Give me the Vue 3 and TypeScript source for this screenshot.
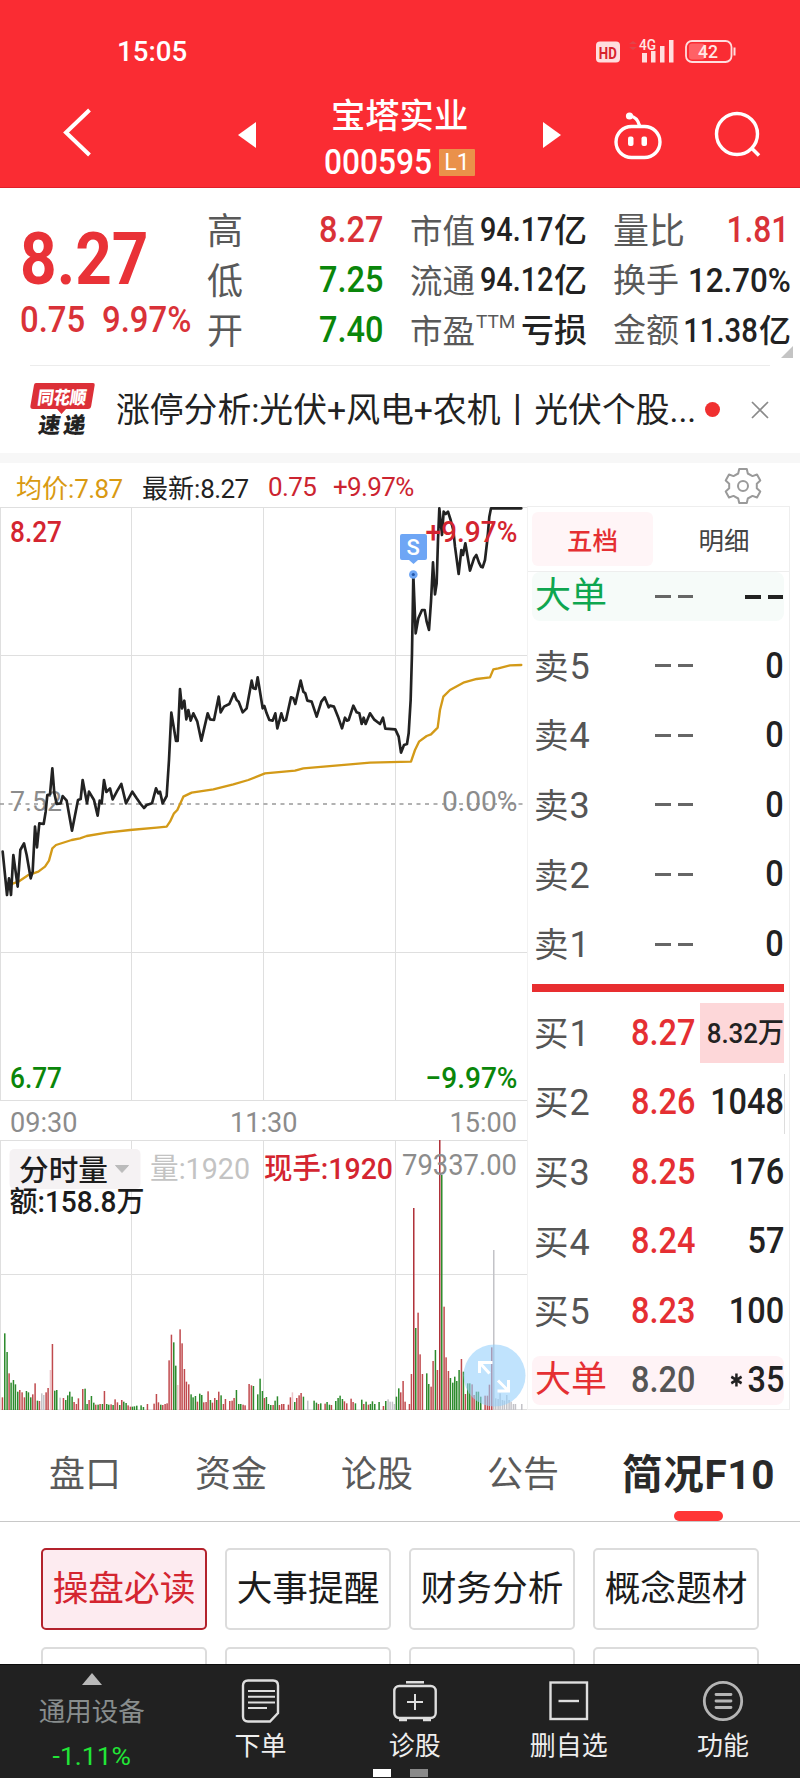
<script setup lang="ts">
type Side = { label: string; price: string; volume: string; tone?: string }

const stats = [
  [
    { label: '高', value: '8.27', tone: 'up' },
    { label: '低', value: '7.25', tone: 'down' },
    { label: '开', value: '7.40', tone: 'down' },
  ],
  [
    { label: '市值', value: '94.17', unit: '亿' },
    { label: '流通', value: '94.12', unit: '亿' },
    { label: '市盈', sup: 'TTM', value: '', unit: '亏损' },
  ],
  [
    { label: '量比', value: '1.81', tone: 'up' },
    { label: '换手', value: '12.70%' },
    { label: '金额', value: '11.38', unit: '亿' },
  ],
]

const sells: Side[] = ['5', '4', '3', '2', '1'].map((n) => ({ label: n, price: '-', volume: '0' }))
const buys: Side[] = [
  { label: '1', price: '8.27', volume: '8.32', tone: 'hot' },
  { label: '2', price: '8.26', volume: '1048', tone: 'edge' },
  { label: '3', price: '8.25', volume: '176' },
  { label: '4', price: '8.24', volume: '57' },
  { label: '5', price: '8.23', volume: '100' },
]

const tabs = ['盘口', '资金', '论股', '公告']
const chips = ['操盘必读', '大事提醒', '财务分析', '概念题材']

// Chart series are stored at three units per pixel.
const priceLine =
  '8,1205 14,1265 21,1335 27,1285 33,1335 40,1215 53,1310 61,1200 72,1180 80,1215 92,1285 98,1265 105,1130 111,1192 118,1120 131,1122 137,1085 142,1035 150,1033 157,955 163,1030 170,1062 182,1060 188,1038 200,1052 216,1142 234,1050 242,1047 248,990 261,1060 267,1025 282,1050 293,1097 299,1052 305,1060 312,990 319,1026 330,1015 338,1048 352,1022 364,1002 378,1060 397,1025 410,1045 422,1062 432,1074 440,1065 456,1060 468,1015 475,1030 480,1025 488,1060 500,1038 507,930 514,788 521,830 528,873 533,873 540,717 546,775 553,752 559,808 565,780 572,812 580,790 592,815 604,872 623,790 630,808 642,810 656,740 662,787 672,770 688,762 702,730 710,750 716,755 728,787 740,775 755,692 760,715 767,717 773,682 788,775 793,768 800,790 808,810 818,812 826,790 832,835 844,790 851,812 858,810 873,742 880,745 886,762 902,692 910,725 916,730 922,752 935,755 950,800 964,755 974,742 986,772 990,767 1002,770 1014,800 1026,835 1035,803 1041,812 1046,810 1060,767 1070,787 1078,790 1085,822 1091,803 1097,822 1110,790 1122,808 1140,822 1149,803 1156,836 1186,838 1196,860 1203,908 1212,885 1221,882 1226,850 1232,750 1236,610 1240,375 1247,550 1255,505 1266,480 1274,480 1280,515 1287,540 1293,455 1299,337 1305,433 1310,400 1314,270 1318,175 1326,255 1331,185 1337,192 1344,185 1352,210 1360,240 1365,290 1376,372 1384,300 1389,315 1396,280 1410,362 1422,325 1429,315 1437,338 1443,350 1448,352 1455,330 1462,270 1468,200 1473,175 1564,175'

const averageLine =
  '27,1305 40,1300 55,1295 85,1275 100,1270 115,1265 135,1250 147,1232 157,1195 168,1185 215,1170 240,1165 260,1158 320,1148 390,1140 470,1133 500,1130 510,1115 522,1090 532,1080 550,1040 575,1028 640,1018 700,1003 745,990 795,970 885,962 910,955 1050,943 1110,938 1233,935 1245,900 1257,875 1280,858 1293,853 1313,833 1320,780 1330,740 1350,720 1390,698 1430,687 1470,682 1480,658 1495,655 1530,646 1564,645'

const volumeData =
  '7r38 14g230 21g174 27r110 33g82 40g90 46g77 53g55 59r60 66r53 73r38 79g57 85g53 92g38 98r47 105r80 112g28 118r27 125n50 131n45 138r53 144r66 151p120 157r198 164g58 170g60 180n37 190r36 197g30 203g44 209g55 216g40 222r24 229r18 235r35 248r63 255g64 261g18 267r30 274g42 281g22 287r16 294g16 300r18 307g18 313r57 320g18 326g16 333r17 339g15 345r32 352r23 359g15 365r30 371g25 378g21 384r14 391r10 397g10 403g11 410g13 423g14 430g9 442r18 462r19 469r48 475r23 482g16 488r15 495r18 501r20 507r149 514r226 521g203 527g133 533p75 540r242 546r200 553r123 559r85 566r77 573g47 579g38 586g42 592r25 599g49 605g45 611r23 618r24 624r56 631g30 637r22 644r36 650g30 656r55 663g44 670r18 676r33 689r27 696r28 702r36 709g60 716g18 722g18 729r16 735r14 747r78 754r74 760g72 773g47 780g94 787g57 793r36 799g39 805g18 812g15 819r15 825g28 832g41 838r15 845r18 851r18 865r16 871r38 877p53 884g24 890r36 897r44 903r51 910g40 923n28 942g28 949g22 955r18 962g20 975r19 981g24 988g16 994r15 1007g27 1014g36 1020g43 1027g33 1033r26 1040r20 1053r34 1059r24 1066g20 1085g31 1091r18 1098g25 1105r16 1111g18 1117g26 1124g18 1137g24 1150r12 1157g27 1164n32 1170n25 1177n25 1183n18 1189g40 1196g65 1202r53 1209r87 1215r25 1228r18 1234r108 1241d606 1247g246 1254r292 1260r167 1267r108 1280g110 1286g78 1293r70 1299r147 1306g180 1312r120 1319d810 1325g705 1332r310 1338r158 1345r117 1351g96 1358g82 1364g100 1370g87 1377g120 1384r153 1390g115 1396r48 1403g80 1409g80 1416r77 1422r45 1429g55 1435g55 1442g40 1455r43 1462r43 1468r76 1475r188 1481n480 1487n35 1494n33 1500n50 1507n30 1513n28 1520n45 1527n30 1533n25 1540n18 1546n18 1565n18'
const palette: Record<string, string> = { r: '#c04a4e', g: '#2c8a2c', n: '#c3c3c8', p: '#ecc4c8', d: '#b03038' }
const volumeBars = volumeData.split(' ').map((s) => {
  const m = /^(\d+)(\w)(\d+)$/.exec(s)!
  return { x: Number(m[1]) / 3 - 0.65, h: Number(m[3]) / 3, fill: palette[m[2]] }
})
</script>

<template>
  <div class="screen">
    <header class="top">
      <div class="status">
        <span class="clock num left">15:05</span>
        <svg width="145" height="34" viewBox="0 0 145 34">
          <rect x="4" y="9.500" width="24" height="21" rx="4" fill="#ffdede" />
          <text x="6.800" y="26.500" textLength="18" lengthAdjust="spacingAndGlyphs" class="r b" font-size="17" fill="#d8232c">HD</text>
          <path d="M37 12l4-3 4 3zM37 15l4 3 4-3z" fill="#e0444a" />
          <text x="47" y="18" textLength="17" lengthAdjust="spacingAndGlyphs" class="r m" font-size="15.500" fill="#ffe6e6">4G</text>
          <g fill="#ffdede">
            <rect x="50" y="21" width="5" height="9.500" />
            <rect x="59" y="19" width="4.500" height="11.500" />
            <rect x="68" y="14" width="4.500" height="16.500" />
            <rect x="77" y="8" width="4.500" height="22.500" />
          </g>
          <rect x="97" y="11.500" width="16" height="16" rx="3" fill="#ff6166" />
          <rect x="94" y="9" width="45.500" height="21" rx="6" fill="none" stroke="#ffdede" stroke-width="1.800" />
          <path d="M142.500 15.500v8" stroke="#ffdede" stroke-width="2" />
          <text x="106" y="26" textLength="20" lengthAdjust="spacingAndGlyphs" class="r m" font-size="18" fill="#ffe6e6">42</text>
        </svg>
      </div>
      <div class="nav">
        <svg class="back" width="34" height="56" viewBox="0 0 34 56"><path d="M27.500 5L4 27.500 27.500 50" fill="none" stroke="#fff" stroke-width="4" /></svg>
        <svg class="prev" width="20" height="28" viewBox="0 0 20 28"><path d="M18 1v26L0 14z" fill="#fff" /></svg>
        <div class="name">
          <h1>宝塔实业</h1>
          <p><span class="num left">000595</span><i>L1</i></p>
        </div>
        <svg class="next" width="20" height="28" viewBox="0 0 20 28"><path d="M1 1v26l18-13z" fill="#fff" /></svg>
        <svg class="robot" width="50" height="50" viewBox="0 0 50 50">
          <rect x="3" y="15.500" width="44" height="31" rx="15.500" fill="none" stroke="#fff" stroke-width="3.400" />
          <circle cx="16.500" cy="5" r="3.600" fill="#fff" />
          <path d="M17 5c5 .5 8 4 9.500 9.500" fill="none" stroke="#fff" stroke-width="3.200" />
          <rect x="15" y="25.500" width="5.500" height="9.500" rx="2" fill="#fff" />
          <rect x="28.500" y="25.500" width="5.500" height="9.500" rx="2" fill="#fff" />
        </svg>
        <svg class="search" width="48" height="50" viewBox="0 0 48 50">
          <circle cx="23" cy="24" r="20.500" fill="none" stroke="#fff" stroke-width="3.400" />
          <path d="M37.500 38l7.500 7.500" stroke="#fff" stroke-width="3.600" />
        </svg>
      </div>
    </header>

    <section class="quote">
      <div class="last">
        <strong class="num left">8.27</strong>
        <p><span class="num left">0.75</span><span class="num left">9.97%</span></p>
      </div>
      <dl v-for="(col, c) in stats" :key="c" :class="'col' + c">
        <div v-for="s in col" :key="s.label">
          <dt>{{ s.label }}<sup v-if="s.sup">{{ s.sup }}</sup></dt>
          <dd :class="s.tone"><span class="num">{{ s.value }}</span><b v-if="s.unit">{{ s.unit }}</b></dd>
        </div>
      </dl>
      <svg class="corner" width="12" height="12" viewBox="0 0 12 12"><path d="M12 0v12H0z" fill="#c4c4c4" /></svg>
    </section>

    <section class="news">
      <svg width="70" height="62" viewBox="0 -3 70 62">
        <path d="M6 3h57q2 0 1.700 2l-3.500 21q-.4 3-3.400 3H36l-4.500 5-4.500-5H3q-3 0-2.600-3L4 5q.3-2 2-2z" fill="#dc3038" />
        <g transform="skewX(-8)">
          <text x="10" y="24" textLength="49" lengthAdjust="spacingAndGlyphs" class="c k" font-size="18" fill="#fff">同花顺</text>
          <text x="15" y="53" class="c k" font-size="22" fill="#222" letter-spacing="3">速递</text>
        </g>
      </svg>
      <p>涨停分析:光伏+风电+农机丨光伏个股...</p>
      <span class="dot" />
      <svg width="20" height="20" viewBox="0 0 20 20"><path d="M2 2l16 16M18 2L2 18" stroke="#8a8a8a" stroke-width="1.700" /></svg>
    </section>

    <section class="legend">
      <span class="avg">均价:<span>7.87</span></span>
      <span class="now">最新:<span>8.27</span></span>
      <span class="chg"><span>0.75</span></span>
      <span class="pct"><span>+9.97%</span></span>
      <svg class="gear" width="40" height="40" viewBox="-20 -20 40 40">
        <path d="M-3.800-17h7.600l1 4.500 4.700 2.600 4.500-1.600 3.300 6.100-3.500 3.200v4.400l3.500 3.200-3.300 6.100-4.500-1.600-4.700 2.600-1 4.500h-7.600l-1-4.500-4.700-2.600-4.500 1.600-3.300-6.100 3.500-3.200v-4.400l-3.500-3.200 3.300-6.100 4.500 1.600 4.700-2.600z" fill="none" stroke="#9a9a9a" stroke-width="2" stroke-linejoin="round" />
        <circle r="5" fill="none" stroke="#9a9a9a" stroke-width="2" />
      </svg>
    </section>

    <section class="market">
      <svg class="chart" width="527" height="904" viewBox="0 506 527 904">
        <g fill="none" stroke="#dfdfdf">
          <path d="M0 507.500h527M0 655.500h527M0 952.500h527M0 1100.500h527M0 1140.500h527M0 1274.500h527M0 1409.500h527" />
          <path d="M.5 507v593M131.500 507v593M263.500 507v593M395.500 507v593M.5 1140v270M131.500 1140v270M263.500 1140v270M395.500 1140v270" />
        </g>
        <path d="M0 804h527" stroke="#999" stroke-width="1.500" stroke-dasharray="4 4.500" />
        <g class="r" font-size="28.500" fill="#8c8c8c">
          <text x="10" y="811" textLength="52" lengthAdjust="spacingAndGlyphs">7.52</text>
          <text x="442" y="811" textLength="75.500" lengthAdjust="spacingAndGlyphs">0.00%</text>
          <text x="10" y="1131.500" textLength="67.500" lengthAdjust="spacingAndGlyphs">09:30</text>
          <text x="230" y="1131.500" textLength="67.500" lengthAdjust="spacingAndGlyphs">11:30</text>
          <text x="449.500" y="1131.500" textLength="67.500" lengthAdjust="spacingAndGlyphs">15:00</text>
        </g>
        <rect x="9.500" y="1149" width="131" height="40" rx="5" fill="#f5f2f3" />
        <path d="M115.500 1165.500h13l-6.500 7z" fill="#bbb" stroke="#bbb" stroke-linejoin="round" />
        <rect v-for="b in volumeBars" :key="b.x" :x="b.x" :y="1410 - b.h" width="1.500" :height="b.h" :fill="b.fill" />
        <g transform="translate(0 450) scale(.33333)" fill="none" stroke-linejoin="round" stroke-linecap="round">
          <polyline :points="averageLine" stroke="#d39a18" stroke-width="7" />
          <polyline :points="priceLine" stroke="#222" stroke-width="8" />
        </g>
        <path d="M402 534h23q2 0 2 2v22q0 2-2 2h-7l-4.500 4-4.500-4h-7q-2 0-2-2v-22q0-2 2-2z" fill="#6ea6f5" />
        <text x="406.500" y="555" class="r m" font-size="22" fill="#fff">S</text>
        <circle cx="413.300" cy="574.500" r="4.300" fill="#6ea6f5" /><circle cx="413.300" cy="574.500" r="1.600" fill="#2456a8" />
        <g class="r m" font-size="29">
          <text x="10" y="541.500" textLength="52" lengthAdjust="spacingAndGlyphs" fill="#d42530">8.27</text>
          <text x="425.500" y="541.500" textLength="92" lengthAdjust="spacingAndGlyphs" fill="#d42530">+9.97%</text>
          <text x="10" y="1087.500" textLength="52" lengthAdjust="spacingAndGlyphs" fill="#0a860a">6.77</text>
          <text x="425.500" y="1087.500" textLength="92" lengthAdjust="spacingAndGlyphs" fill="#0a860a">−9.97%</text>
        </g>
        <g class="c" font-size="29">
          <text x="19" y="1181" textLength="89" lengthAdjust="spacingAndGlyphs" class="m" fill="#1c1c1c">分时量</text>
          <text x="150" y="1179" textLength="100" lengthAdjust="spacingAndGlyphs" fill="#c3c3c3">量:1920</text>
          <text x="264" y="1179" textLength="129" lengthAdjust="spacingAndGlyphs" class="m" fill="#d42530">现手:1920</text>
          <text x="402" y="1175" textLength="115" lengthAdjust="spacingAndGlyphs" fill="#8c8c8c">79337.00</text>
          <text x="9.500" y="1211.500" textLength="135" lengthAdjust="spacingAndGlyphs" class="m" fill="#1c1c1c">额:158.8万</text>
        </g>
        <circle cx="494.500" cy="1375.500" r="31" fill="#96d0fb" fill-opacity=".6" />
        <g fill="none" stroke="#fff" stroke-width="3">
          <path d="M479.500 1373v-10.500h13M479.500 1362.500l10 11" />
          <path d="M508.500 1380v11h-11M498 1380.500l10 10" />
        </g>
      </svg>

      <aside class="book">
        <div class="switch"><b>五档</b><span>明细</span></div>
        <div class="big sell"><em>大单</em><i class="dash"><u /><u /></i><i class="dash dark"><u /><u /></i></div>
        <div v-for="s in sells" :key="s.label" class="level ask">
          <em>卖<span>{{ s.label }}</span></em><i class="dash"><u /><u /></i><strong class="num">{{ s.volume }}</strong>
        </div>
        <hr />
        <div v-for="s in buys" :key="s.label" class="level" :class="s.tone">
          <em>买<span>{{ s.label }}</span></em><b class="num">{{ s.price }}</b>
          <strong class="num">{{ s.volume }}<template v-if="s.tone === 'hot'">万</template></strong>
        </div>
        <div class="big buy"><em>大单</em><b class="num">8.20</b><strong class="num"><svg width="15" height="14" viewBox="-7.500 -7 15 14"><path d="M0-6.500V6.500M-5.800-3.200l11.600 6.400M5.800-3.200l-11.600 6.400" stroke="#222" stroke-width="2.800" /></svg>35</strong></div>
      </aside>
    </section>

    <nav class="tabs">
      <span v-for="t in tabs" :key="t">{{ t }}</span>
      <b>简况F10</b>
    </nav>

    <section class="chips">
      <button v-for="(c, i) in chips" :key="c" :class="{ on: i === 0 }">{{ c }}</button>
      <button v-for="c in chips" :key="c + 'next'" />
    </section>

    <footer class="bar">
      <div class="sector">
        <svg width="20" height="12" viewBox="0 0 20 12"><path d="M10 0l10 12H0z" fill="#b9b9b9" /></svg>
        <span>通用设备</span>
        <b>-1.11%</b>
      </div>
      <div class="act">
        <svg width="44" height="44" viewBox="0 0 44 44" fill="none" stroke="#dedede" stroke-width="2.400">
          <path d="M9 1.500h25q5 0 5 5v27.500l-8 8.500H9q-5 0-5-5v-31q0-5 5-5z" /><path d="M9 12h27M9 17.700h27M9 23.400h27M9 29h19" stroke-width="2" />
        </svg>
        <span>下单</span>
      </div>
      <div class="act">
        <svg width="44" height="44" viewBox="0 0 44 44" fill="none" stroke="#dedede" stroke-width="2.400">
          <rect x="1.300" y="7" width="41.400" height="32" rx="5" /><path d="M13 3.200h18M6 41h8M30 41h8" /><path d="M22 15v16M14 23h16" stroke-width="2" />
        </svg>
        <span>诊股</span>
      </div>
      <div class="act">
        <svg width="44" height="44" viewBox="0 0 44 44" fill="none" stroke="#dedede" stroke-width="2.400">
          <rect x="3.500" y="3.500" width="36.500" height="36.500" /><path d="M11.500 22h20.500" />
        </svg>
        <span>删自选</span>
      </div>
      <div class="act">
        <svg width="44" height="44" viewBox="0 0 44 44" fill="none" stroke="#b5b5b5" stroke-width="2.800">
          <circle cx="22" cy="22" r="18.700" /><path d="M15 15.500h15M15 22h15M15 28.500h15" stroke-linecap="round" />
        </svg>
        <span>功能</span>
      </div>
      <div class="pages"><i /><i /></div>
    </footer>
  </div>
</template>

<style>
body { margin: 0; background: #fff; }
</style>

<style scoped>
* { box-sizing: border-box; margin: 0; padding: 0; }
svg { display: block; flex: none; }
i, em { font-style: normal; }
.screen { width: 800px; height: 1778px; display: flex; flex-direction: column; overflow: hidden; background: #fff; font-family: Roboto, "Noto Sans CJK SC", sans-serif; color: #222; white-space: nowrap; }
.screen > * { flex: none; }
/* Figures are set slightly condensed, anchored to the side they align to. */
.num { display: inline-block; flex: none; font-weight: 500; line-height: 1; transform: scaleX(.89); transform-origin: right center; }
.num.left { transform-origin: left center; }
.r { font-family: Roboto, sans-serif; }
.c { font-family: Roboto, "Noto Sans CJK SC", sans-serif; }
.m { font-weight: 500; }
.b { font-weight: 700; }
.k { font-weight: 900; }

.top { height: 188px; background: #fa2c33; color: #fff; border-bottom: 1px solid #e0202a; }
.status { height: 84px; padding: 32px 63px 0 117px; display: flex; justify-content: space-between; }
.clock { font-size: 28.500px; line-height: 40px; transform: scaleX(.97); }
.nav { height: 103px; display: flex; align-items: flex-start; padding-left: 62px; }
.back { margin-top: 21px; }
.prev { margin: 37px 0 0 142px; }
.name { width: 152px; margin-left: 66px; margin-top: 10px; }
.name h1 { font-size: 34.300px; line-height: 44px; font-weight: 500; padding-left: 7px; }
.name p { display: flex; height: 44px; align-items: center; font-size: 35px; margin-top: 2px; }
.name .num { width: 115px; transform: scaleX(.905); }
.name p i { flex: none; width: 36px; height: 27px; background: #ea914a; font: 400 23px/28px Roboto, sans-serif; text-align: center; border-radius: 1px; }
.next { margin: 37px 0 0 66px; }
.robot { margin: 27px 0 0 51px; }
.search { margin: 26px 0 0 51px; }

.quote { height: 177px; display: flex; position: relative; }
.last { width: 207px; padding-left: 20px; color: #e93237; flex: none; }
.last strong { display: block; font-size: 73px; line-height: 72px; margin-top: 35px; font-weight: 700; transform: scaleX(.875); }
.last p { display: flex; font-size: 36.500px; height: 44px; align-items: center; margin-top: 3px; color: #d93238; }
.last p .num:first-child { width: 82px; }
.last p .num { transform: scaleX(.9); }
dl { padding-top: 17px; flex: none; }
dl > div { height: 50px; display: flex; align-items: center; justify-content: space-between; }
dt { color: #595959; position: relative; top: -2px; flex: none; }
dd { display: flex; align-items: center; justify-content: flex-end; color: #222; margin-left: -24px; flex: none; }
dd b { font-weight: 500; }
.col0 { width: 176px; font-size: 36.500px; }
.col0 dt { font-size: 36px; }
.col1 { width: 177px; margin-left: 27px; font-size: 33.500px; }
.col1 dt { font-size: 32.500px; }
.col2 { width: 178px; margin-left: 26px; font-size: 34px; }
.col1 .num { transform: scaleX(.86); margin-right: 1px; }
.col2 .num { transform: scaleX(.92); }
.col2 div:last-child .num { transform: scaleX(.86); }
.col1 b { font-size: 33px; position: relative; top: -2px; }
.col2 b { font-size: 32px; margin-left: 1px; position: relative; top: -2px; }
.col2 dt { font-size: 33px; }
.col2 div:first-child dt { font-size: 36px; }
.col2 .up { font-size: 36.500px; padding-right: 2px; }
.col2 .up .num { transform: scaleX(.87); }
sup { position: absolute; left: 66px; top: 7px; font-size: 19px; line-height: 20px; font-weight: 400; }
.up { color: #d93238; }
.down { color: #0a860a; }
.corner { position: absolute; right: 7px; bottom: 7px; }

.news { height: 88px; margin: 0 30px; border-top: 1px solid #ececec; display: flex; align-items: center; }
.news > svg:first-child { margin-top: -4px; }
.news p { width: 591px; margin-left: 16px; font-size: 33.800px; line-height: 44px; margin-top: 2px; }
.news .dot { flex: none; width: 15px; height: 15px; border-radius: 50%; background: #f03030; margin-left: 1px; }
.news .dot + svg { margin-left: 30px; }

.legend { height: 53px; border-top: 10px solid #f7f7f7; display: flex; align-items: center; font-size: 26px; padding: 3px 0 0 16px; }
.legend > span { flex: none; }
.avg { width: 126px; color: #d99a12; }
.now { width: 126px; }
.chg { width: 65px; color: #cc2430; }
.pct { color: #cc2430; }
.chg, .pct { padding-top: 2px; }
.legend span span { letter-spacing: -.025em; }
.gear { margin-left: auto; margin-right: 37px; margin-top: 0; }

.market { height: 904px; display: flex; }
.chart { flex: none; }
.book { width: 263px; flex: none; border: 1px solid #eee; border-left-color: #f2f2f2; padding-left: 4px; }
.switch { height: 65px; margin-left: -4px; padding: 5px 0 0 4px; border-bottom: 1px solid #eee; display: flex; font-size: 25.500px; line-height: 58px; text-align: center; }
.switch b { flex: none; width: 121px; height: 54px; border-radius: 6px; background: #fff5f7; color: #e52f33; font-weight: 500; }
.switch span { flex: none; width: 142px; color: #444; }
.big { display: grid; grid-template-columns: 80px 78px 93px; align-items: center; width: 252px; height: 49px; border-radius: 8px; padding-left: 3px; font-size: 36.500px; }
.big em { line-height: 49px; font-size: 36px; }
.big.sell { background: #f6fbf9; color: #0ea650; margin: 0 0 10px; }
.big.buy { background: #fff3f6; color: #e52f33; margin-top: 10px; }
.level { position: relative; display: grid; grid-template-columns: 80px 78px 93px; align-items: center; width: 252px; height: 69.600px; padding-left: 3px; font-size: 36.500px; }
.level em { color: #555; font-size: 34.500px; position: relative; top: -2px; left: -1px; }
.level em span { font-size: 36px; margin-left: 1px; }
.level b, .big b { justify-self: end; color: #e52f33; position: relative; left: 2px; }
.big b { color: #555; }
.level strong, .big strong { justify-self: end; color: #222; margin-right: 2px; font-weight: 500; }
.big strong { display: flex; align-items: center; gap: 5px; }
.dash { display: flex; gap: 7px; justify-self: end; }
.dash u { width: 15.500px; height: 3px; background: #666; }
.dash.dark { padding-right: 3px; }
.dash.dark u { background: #222; height: 4px; }
hr { width: 252px; height: 8px; border: 0; background: #e82e30; margin: 5px 0 6px; }
.hot::before { content: ""; position: absolute; right: 0; top: 5px; width: 84px; height: 60px; background: #fdd7d9; }
.hot strong { position: relative; font-size: 28.500px; top: 1px; transform: scaleX(.91); }
.edge::after { content: ""; position: absolute; right: -1px; top: 6px; width: 1px; height: 60px; background: #ddd; }

.tabs { height: 112px; border-bottom: 1px solid #c8c8c8; display: flex; align-items: center; padding: 11px 0 0 49px; font-size: 36px; color: #5a5a5a; }
.tabs span { width: 146px; }
.tabs b { position: relative; margin-left: -11px; font-size: 40.500px; letter-spacing: .7px; color: #2a2a2a; }
.tabs b::after { content: ""; position: absolute; left: 52px; bottom: -20px; width: 49px; height: 10px; border-radius: 5px; background: #ff3535; }

.chips { height: 142px; overflow: hidden; padding: 26px 41px 0; display: grid; grid-template-columns: repeat(4, 166px); grid-auto-rows: 82px; gap: 17px 18px; }
.chips button { border: 2px solid #dcdcdc; border-radius: 5px; background: #fff; font: 400 35.700px/78px Roboto, "Noto Sans CJK SC", sans-serif; color: #1c1c1c; padding: 0; white-space: nowrap; }
.chips .on { border-color: #b3222c; background: #fdebf0; color: #d42530; }

.bar { position: relative; height: 114px; background: #212121; border-top: 1px solid #0c0c0c; display: flex; }
.sector { width: 184px; display: flex; flex-direction: column; align-items: center; padding-top: 8px; font-size: 26.500px; }
.sector span { color: #888d8d; line-height: 38px; margin-top: 8px; }
.sector b { color: #21e637; font-weight: 400; line-height: 30px; font-size: 26.500px; margin-top: 10px; }
.act { width: 154.500px; display: flex; flex-direction: column; align-items: center; padding-top: 14px; font-size: 26px; color: #eee; }
.act span { line-height: 38px; margin-top: 4px; }
.pages { position: absolute; left: 373px; bottom: 1px; display: flex; gap: 19px; }
.pages i { width: 18px; height: 8px; background: #fff; }
.pages i + i { background: #8a8a8a; }
</style>
